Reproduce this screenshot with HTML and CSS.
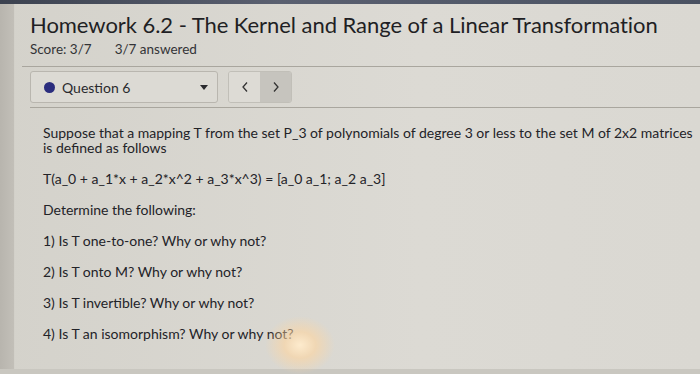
FILE: index.html
```html
<!DOCTYPE html>
<html>
<head>
<meta charset="utf-8">
<link rel="stylesheet" href="styles.css">
</head>
<body>
<div class="screen">
  <div class="topbar"></div>
  <div class="main">
    <div class="edge"></div>
    <div class="panel">
      <header class="head">
        <h1 class="title">Homework 6.2 - The Kernel and Range of a Linear Transformation</h1>
        <div class="score"><span>Score: 3/7</span><span>3/7 answered</span></div>
      </header>
      <div class="toolbar">
        <div class="qselect">
          <span class="dot"></span>
          <span class="qlabel">Question 6</span>
          <span class="caret"></span>
        </div>
        <div class="nav">
          <span class="navbtn prev"><svg width="8" height="12" viewBox="0 0 8 12"><path d="M6 1.5 L2 6 L6 10.5" fill="none" stroke="#333" stroke-width="1.3"/></svg></span>
          <span class="navbtn next"><svg width="8" height="12" viewBox="0 0 8 12"><path d="M2 1.5 L6 6 L2 10.5" fill="none" stroke="#333" stroke-width="1.3"/></svg></span>
        </div>
      </div>
      <div class="question">
        <p>Suppose that a mapping T from the set P_3 of polynomials of degree 3 or less to the set M of 2x2 matrices is defined as follows</p>
        <p>T(a_0 + a_1*x + a_2*x^2 + a_3*x^3) = [a_0 a_1; a_2 a_3]</p>
        <p>Determine the following:</p>
        <p>1) Is T one-to-one? Why or why not?</p>
        <p>2) Is T onto M? Why or why not?</p>
        <p>3) Is T invertible? Why or why not?</p>
        <p>4) Is T an isomorphism? Why or why not?</p>
      </div>
    </div>
  </div>
  <div class="glare"></div>
</div>
</body>
</html>
```
FILE: styles.css
```css
* { box-sizing: border-box; }
html, body { margin: 0; padding: 0; }
body {
  width: 700px;
  height: 374px;
  overflow: hidden;
  font-family: Lato, "Open Sans", sans-serif;
  color: #26262a;
  background: #d6d4ce;
}
.screen {
  position: relative;
  width: 700px;
  height: 374px;
  display: flex;
  flex-direction: column;
  background: linear-gradient(90deg, #d4d2cb 0%, #dcdad4 60%, #dad8d2 100%);
}
.topbar {
  height: 4px;
  background: linear-gradient(90deg, #3c4250, #5a6070 40%, #4a5262);
  flex: none;
}
.main {
  flex: 1;
  display: flex;
  min-height: 0;
  border-bottom: 5px solid #c9c7c0;
}
.edge {
  width: 15px;
  flex: none;
  background: linear-gradient(90deg, #b8b5ae, #c2bfb8);
  border-right: 1px solid #d2d0c9;
}
.panel {
  flex: 1;
  padding-left: 15px;
}
.head {
  padding-top: 8px;
  padding-bottom: 8px;
  border-bottom: 1px solid #a9a69e;
  margin-left: -8px;
  padding-left: 8px;
}
.title {
  margin: 0;
  font-size: 22px;
  font-weight: 400;
  line-height: 26px;
  color: #1f1f24;
  letter-spacing: -0.05px;
}
.score {
  display: flex;
  gap: 23px;
  font-size: 13.5px;
  line-height: 18px;
  margin-top: 2px;
  color: #333336;
}
.toolbar {
  display: flex;
  gap: 10px;
  padding: 4px 0 4px;
  border-bottom: 1px solid #a9a69e;
}
.qselect {
  width: 188px;
  height: 32px;
  display: flex;
  align-items: center;
  padding: 0 9px 0 13px;
  border: 1px solid #b9b6af;
  border-radius: 3px;
  background: #dcdad4;
}
.dot {
  width: 11px;
  height: 11px;
  border-radius: 50%;
  background: #2b2d7e;
  flex: none;
}
.qlabel {
  margin-left: 7px;
  font-size: 14px;
  flex: 1;
  color: #2a2a2e;
}
.caret {
  width: 0;
  height: 0;
  border-left: 4px solid transparent;
  border-right: 4px solid transparent;
  border-top: 5px solid #2a2a2e;
}
.nav {
  display: flex;
  height: 32px;
  border: 1px solid #c1bfb8;
  border-radius: 3px;
  overflow: hidden;
}
.navbtn {
  width: 31px;
  display: flex;
  align-items: center;
  justify-content: center;
}
.prev { background: #dddbd5; }
.next { background: #c6c4be; }
.question {
  padding: 17px 0 0 13px;
  font-size: 14px;
  line-height: 15px;
  color: #232328;
}
.question p {
  margin: 0 0 16px;
}
.glare {
  position: absolute;
  left: 265px;
  top: 316px;
  width: 70px;
  height: 58px;
  border-radius: 50%;
  background: radial-gradient(closest-side, rgba(255, 236, 205, 0.95), rgba(255, 214, 160, 0.6) 45%, rgba(255, 230, 195, 0) 100%);
  pointer-events: none;
}
```
